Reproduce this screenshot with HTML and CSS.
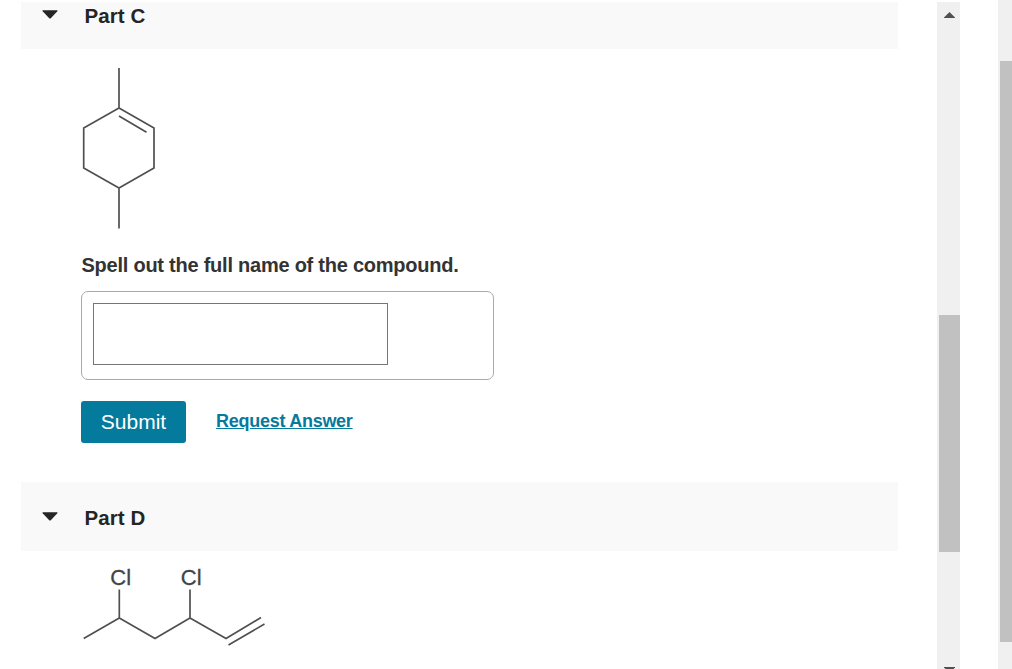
FILE: index.html
```html
<!DOCTYPE html>
<html lang="en">
<head>
    <meta charset="UTF-8">
    <meta name="viewport" content="width=device-width, initial-scale=1.0">
    <title>Naming Compounds</title>
    <link rel="stylesheet" href="styles.css">
</head>
<body>

    <main id="content">
        <section class="part">
            <h2 class="part-header part-header-top">
                <svg class="arrow" width="16" height="9" viewBox="0 0 16 9"><path d="M0.8 0.3H15.2Q15.9 0.5 15.3 1.2L9 8Q8 9 7 8L0.7 1.2Q0.1 0.5 0.8 0.3Z"/></svg>
                <span>Part C</span>
            </h2>
            <div class="part-body">
                <svg class="molecule" width="80" height="170" viewBox="80 63 80 170">
                    <path d="M119 68V108L154 128V168L119 188L83.7 168V128L119 108M119 188V228.5M119 116L146.5 132.3"/>
                </svg>
                <label class="question" for="answer">Spell out the full name of the compound.</label>
                <div class="answer-box">
                    <input type="text" id="answer">
                </div>
                <div class="actions">
                    <button type="button" class="submit">Submit</button>
                    <a href="#" class="request">Request Answer</a>
                </div>
            </div>
        </section>

        <section class="part">
            <h2 class="part-header">
                <svg class="arrow" width="16" height="9" viewBox="0 0 16 9"><path d="M0.8 0.3H15.2Q15.9 0.5 15.3 1.2L9 8Q8 9 7 8L0.7 1.2Q0.1 0.5 0.8 0.3Z"/></svg>
                <span>Part D</span>
            </h2>
            <div class="part-body">
                <svg class="molecule" width="190" height="90" viewBox="80 565 190 90">
                    <path d="M83.7 638.5L119.3 618L155 638.5L190 618L226 638.5L261 617.5M228.5 645L264.5 624M119.3 618V589.5M190 618V589.5"/>
                    <text x="110.3" y="585">Cl</text>
                    <text x="180.8" y="585">Cl</text>
                </svg>
            </div>
        </section>
    </main>

    <div class="scrollbar inner-bar">
        <svg class="bar-arrow" width="11" height="6" viewBox="0 0 11 6"><path d="M5.5 0L11 5.5V6H0V5.5Z"/></svg>
        <div class="thumb"></div>
        <svg class="bar-arrow bar-arrow-down" width="11" height="6" viewBox="0 0 11 6"><path d="M0 0H11V0.5L5.5 6L0 0.5Z"/></svg>
    </div>
    <div class="scrollbar outer-bar">
        <div class="thumb"></div>
    </div>

</body>
</html>
```
FILE: styles.css
```css
body {
    font-family: "Liberation Sans", Arial, sans-serif;
    margin: 0;
    height: 669px;
    display: flex;
    overflow: hidden;
    background-color: #fff;
    color: #333;
}

#content {
    width: 877px;
    padding: 2px 39px 0 21px;
}

.part-header {
    display: flex;
    align-items: center;
    box-sizing: border-box;
    height: 69px;
    margin: 0;
    padding: 2px 0 0 21px;
    background-color: #f9f9f9;
    color: #252525;
    font-size: 20.5px;
    letter-spacing: 0.1px;
}

.part-header-top {
    height: 47px;
    padding: 0 0 20px 21px;
}

.part-header span {
    margin-left: 26.5px;
}

.arrow {
    fill: #252525;
    margin-top: -2px;
}

.part-body {
    padding: 14px 0 0 60px;
}

.molecule {
    display: block;
    margin-left: -1px;
}

.molecule path {
    fill: none;
    stroke: #505050;
    stroke-width: 1.7;
}

.molecule text {
    font-size: 22px;
    fill: #444;
    stroke: #444;
    stroke-width: 0.3px;
}

.question {
    display: block;
    margin: 20px 0 0 0.5px;
    font-size: 20px;
    font-weight: bold;
    line-height: 24px;
    letter-spacing: -0.24px;
}

.answer-box {
    box-sizing: border-box;
    width: 413px;
    height: 89px;
    margin-top: 14px;
    padding: 11px;
    border: 1px solid #aaa;
    border-radius: 7px;
}

.answer-box input {
    display: block;
    box-sizing: border-box;
    width: 295px;
    height: 62px;
    border: 1px solid #767676;
    border-radius: 0;
    outline: none;
    font-size: 20px;
}

.actions {
    display: flex;
    align-items: center;
    margin: 21px 0 39px;
}

.submit {
    width: 105px;
    height: 42px;
    padding: 0;
    border: none;
    border-radius: 3px;
    background-color: #047a9c;
    color: #fff;
    font-family: inherit;
    font-size: 21px;
}

.request {
    margin: 0 0 2px 30px;
    color: #047a9c;
    font-size: 18px;
    font-weight: bold;
    letter-spacing: -0.27px;
}

.scrollbar {
    box-sizing: border-box;
    background-color: #f0f0f0;
}

.thumb {
    background-color: #c1c1c1;
}

.bar-arrow {
    display: block;
    margin-left: 5px;
    fill: #505050;
}

.inner-bar {
    width: 23px;
    height: 667px;
    margin-top: 2px;
    padding: 10px 0 0 2px;
}

.inner-bar .thumb {
    height: 237px;
    margin-top: 297px;
}

.bar-arrow-down {
    margin-top: 115px;
}

.outer-bar {
    width: 14px;
    margin-left: 38px;
    padding: 61px 0 0 2px;
}

.outer-bar .thumb {
    height: 581px;
}
```
